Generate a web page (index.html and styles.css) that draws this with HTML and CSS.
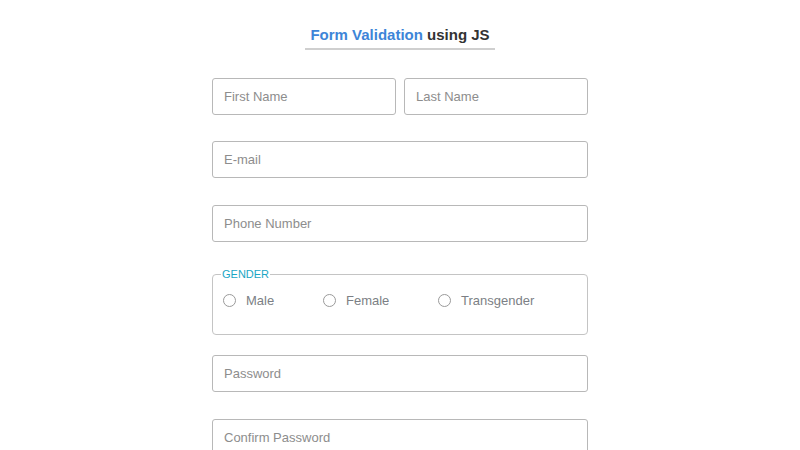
FILE: index.html
```html
<!DOCTYPE html>
<html lang="en">
<head>
<meta charset="utf-8">
<title>Form Validation using JS</title>
<link rel="stylesheet" href="styles.css">
</head>
<body>
<div class="wrap">
  <div class="title-row">
    <h1 class="title"><span class="accent">Form Validation</span> using JS</h1>
  </div>
  <form class="form">
    <div class="field field-first row-2">
      <input class="input" type="text" placeholder="First Name">
      <input class="input" type="text" placeholder="Last Name">
    </div>
    <div class="field">
      <input class="input" type="text" placeholder="E-mail">
    </div>
    <div class="field field-phone">
      <input class="input" type="text" placeholder="Phone Number">
    </div>
    <fieldset class="gender">
      <legend class="legend">GENDER</legend>
      <div class="radios">
        <label class="radio r-male"><span class="dot"></span>Male</label>
        <label class="radio r-female"><span class="dot"></span>Female</label>
        <label class="radio"><span class="dot"></span>Transgender</label>
      </div>
    </fieldset>
    <div class="field">
      <input class="input" type="password" placeholder="Password">
    </div>
    <div class="field">
      <input class="input" type="password" placeholder="Confirm Password">
    </div>
  </form>
</div>
</body>
</html>
```
FILE: styles.css
```css
* { box-sizing: border-box; }
html, body { margin: 0; padding: 0; background: #fff; }
body { font-family: "Liberation Sans", Arial, sans-serif; }
.wrap { width: 376px; margin: 0 auto; }
.title-row { text-align: center; padding-top: 26px; }
.title {
  display: inline-block;
  margin: 0;
  padding: 0 5px 4px;
  font-size: 15px;
  line-height: 18px;
  font-weight: bold;
  color: #333;
  border-bottom: 2px solid #cfcfcf;
}
.accent { color: #3d85d8; }
.form { margin-top: 28px; }
.field { margin-bottom: 27px; }
.field-first { margin-bottom: 26px; }
.field-phone { margin-bottom: 26px; }
.row-2 { display: flex; gap: 8px; }
.input {
  display: block;
  width: 100%;
  height: 37px;
  padding: 0 11px;
  border: 1px solid #b8b8b8;
  border-radius: 3px;
  font-family: "Liberation Sans", Arial, sans-serif;
  font-size: 13px;
  color: #333;
  outline: none;
}
.input::placeholder { color: #8d8d8d; }
.gender {
  margin: 0 0 20px;
  padding: 0 8px 24px;
  border: 1px solid #c4c4c4;
  border-radius: 4px;
  min-width: 0;
}
.legend {
  padding: 0 1px;
  font-size: 11px;
  line-height: 13px;
  color: #1aa6c4;
}
.radios { display: flex; align-items: center; padding-top: 11px; }
.radio {
  display: flex;
  align-items: center;
  font-size: 13px;
  color: #7c7f85;
  line-height: 18px;
}
.r-male { width: 100px; }
.r-female { width: 115px; }
.dot {
  width: 13px;
  height: 13px;
  border: 1px solid #9a9a9a;
  border-radius: 50%;
  margin: 0 10px 1px 2px;
  background: #fff;
}
```
